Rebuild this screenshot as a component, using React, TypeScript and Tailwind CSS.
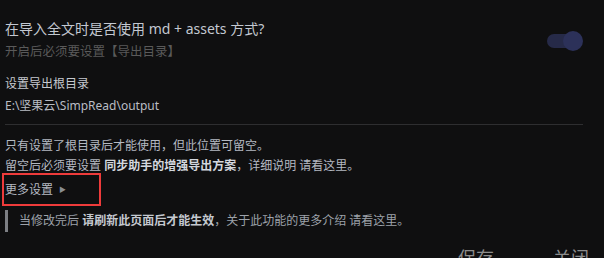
import React from "react";

const font = "font-['Noto_Sans','Noto_Sans_CJK_SC',sans-serif]";

function Toggle() {
  return (
    <div className="relative h-[20px] w-[36px] shrink-0">
      <div className="absolute left-0 top-[3px] h-[14px] w-[34px] rounded-full bg-[#262a48]" />
      <div className="absolute right-0 top-0 h-[20px] w-[20px] rounded-full bg-[#2c3159]" />
    </div>
  );
}

export default function App() {
  return (
    <main className={`${font} h-[258px] w-[604px] overflow-hidden bg-[#0f0f10]`}>
      <div className="pl-[5px] pr-[21px] pt-[19px]">
        <div className="flex items-center justify-between">
          <div className="flex flex-col gap-[3px]">
            <p className="text-[14px] leading-[20px] text-[#c3c8d1]">
              在导入全文时是否使用 md + assets 方式?
            </p>
            <p className="text-[12.5px] leading-[20px] text-[#5a5a5a]">
              开启后必须要设置【导出目录】
            </p>
          </div>
          <Toggle />
        </div>

        <p className="mt-[12px] text-[12px] leading-[20px] text-[#c6c9cf]">设置导出根目录</p>
        <p className="mt-[2px] text-[12px] leading-[20px] text-[#b9bdc4]">
          E:\坚果云\SimpRead\output
        </p>

        <div className="mt-[8px] border-t border-[#2e2e30]" />

        <p className="mt-[11px] text-[12px] leading-[20px] text-[#b4b9c2]">
          只有设置了根目录后才能使用，但此位置可留空。
        </p>
        <p className="text-[12px] leading-[20px] text-[#b4b9c2]">
          留空后必须要设置 <span className="font-bold text-[#d3d7de]">同步助手的增强导出方案</span>，详细说明 请看这里。
        </p>

        <div className="relative mt-[4px] flex items-center gap-[6px] text-[12px] leading-[20px] text-[#b4b9c2]">
          <span>更多设置</span>
          <span className="text-[7px] text-[#8a8d92]">▶</span>
          <div className="absolute left-[-3px] top-[-7px] h-[33px] w-[99px] border-2 border-[#ee3b3b]" />
        </div>

        <div className="mt-[10px] flex border-l-[3px] border-[#7d7f84] pl-[11px] text-[12px] leading-[22px] text-[#9da2aa]">
          <p>
            当修改完后 <span className="font-bold text-[#c4c8cf]">请刷新此页面后才能生效</span>，关于此功能的更多介绍 请看这里。
          </p>
        </div>
      </div>

      <div className="mt-[14px] flex justify-end gap-[59px] pr-[15px] text-[18px] leading-[24px] text-[#8c8c8c]">
        <button className="cursor-pointer">保存</button>
        <button className="cursor-pointer">关闭</button>
      </div>
    </main>
  );
}
